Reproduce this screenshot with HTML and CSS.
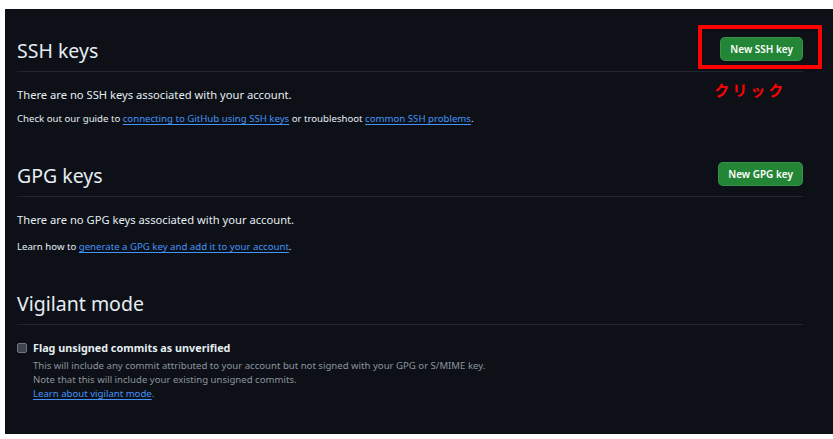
FILE: index.html
```html
<!DOCTYPE html>
<html lang="ja">
<head>
  <meta charset="UTF-8" />
  <meta name="viewport" content="width=device-width, initial-scale=1.0" />
  <title>SSH and GPG keys</title>
  <link rel="stylesheet" href="styles.css">
</head>
<body>
  <main class="panel">
    <section class="keys">
      <div class="section-head">
        <h2>SSH keys</h2>
        <div class="callout">
          <a href="#" class="btn">New SSH key</a>
          <span class="callout-box"></span>
          <span class="callout-label">クリック</span>
        </div>
      </div>
      <p class="empty">There are no SSH keys associated with your account.</p>
      <p class="note">
        Check out our guide to <a href="#">connecting to GitHub using SSH keys</a> or troubleshoot <a href="#">common SSH problems</a>.
      </p>
    </section>

    <section class="keys">
      <div class="section-head">
        <h2>GPG keys</h2>
        <a href="#" class="btn">New GPG key</a>
      </div>
      <p class="empty">There are no GPG keys associated with your account.</p>
      <p class="note note-wide">
        Learn how to <a href="#">generate a GPG key and add it to your account</a>.
      </p>
    </section>

    <section class="keys">
      <div class="section-head">
        <h2>Vigilant mode</h2>
      </div>
      <div class="check-row">
        <span class="checkbox"></span>
        <div class="check-text">
          <label>Flag unsigned commits as unverified</label>
          <p class="hint">This will include any commit attributed to your account but not signed with your GPG or S/MIME key.</p>
          <p class="hint">Note that this will include your existing unsigned commits.</p>
          <p class="hint"><a href="#">Learn about vigilant mode</a>.</p>
        </div>
      </div>
    </section>
  </main>
</body>
</html>
```

FILE: styles.css
```css
body {
  margin: 0;
  background-color: #ffffff;
  font-family: 'Noto Sans', 'Noto Sans CJK JP', sans-serif;
  color: #e6edf3;
}
.panel {
  margin: 9px 0 5px 5px;
  height: 397px;
  padding: 28px 30px 0 12px;
  background-color: #0d1117;
}
.keys {
  margin-bottom: 34px;
}
.section-head {
  display: flex;
  justify-content: space-between;
  align-items: center;
  height: 24px;
  padding-bottom: 10px;
  border-bottom: 1px solid #21262d;
}
.section-head h2 {
  margin: 0;
  padding-top: 3px;
  font-size: 19.5px;
  font-weight: 400;
  line-height: 21px;
}
.btn {
  display: block;
  box-sizing: border-box;
  height: 24px;
  padding: 0 9px;
  line-height: 22px;
  font-size: 10px;
  font-weight: 600;
  color: #ffffff;
  text-decoration: none;
  background-color: #238636;
  border: 1px solid rgba(240, 246, 252, 0.1);
  border-radius: 5px;
}
.callout {
  position: relative;
}
.callout-box {
  position: absolute;
  top: -12px;
  left: -22px;
  right: -19px;
  bottom: -8px;
  border: 4px solid #ff0000;
}
.callout-label {
  position: absolute;
  top: 42px;
  left: -6px;
  font-family: 'Noto Sans CJK JP', sans-serif;
  font-size: 15px;
  font-weight: 700;
  letter-spacing: 3px;
  color: #ff0000;
  white-space: nowrap;
}
p {
  margin: 0;
}
.empty {
  margin-top: 14px;
  font-size: 11.2px;
  line-height: 18px;
}
.note {
  margin-top: 6px;
  font-size: 9.65px;
  line-height: 18px;
}
.note-wide {
  margin-top: 9px;
}
a {
  color: #4493f8;
  text-underline-offset: 2px;
}
.check-row {
  display: flex;
  gap: 6px;
  margin-top: 15px;
}
.checkbox {
  box-sizing: border-box;
  width: 10px;
  height: 10px;
  margin-top: 3px;
  background-color: #3d444d;
  border: 1px solid #6e7681;
  border-radius: 2px;
}
.check-text label {
  display: block;
  font-size: 10.8px;
  font-weight: 700;
  line-height: 16px;
  margin-bottom: 3px;
}
.hint {
  font-size: 9.6px;
  line-height: 14px;
  color: #8b949e;
}
```
